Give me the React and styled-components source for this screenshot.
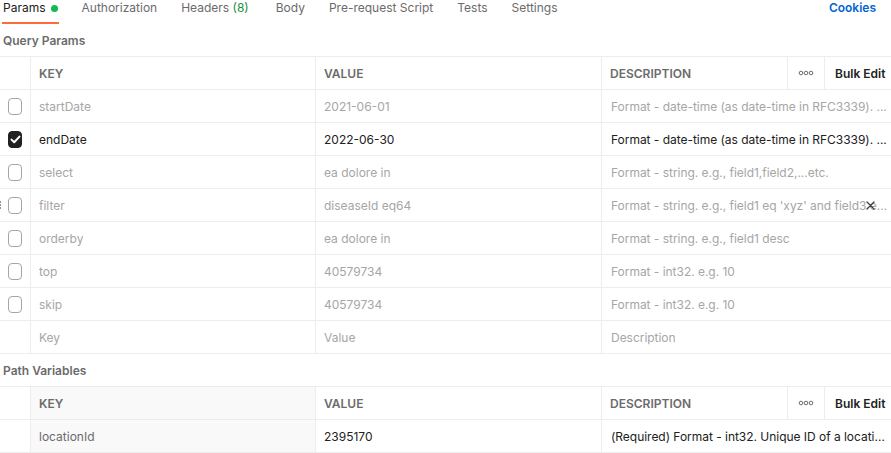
import styled, { createGlobalStyle } from "styled-components";

const GlobalStyle = createGlobalStyle`
  * { box-sizing: border-box; }
  body {
    margin: 0;
    background: #ffffff;
    font-family: Inter, "Noto Sans", sans-serif;
    font-size: 12px;
    color: #212121;
  }
`;

const Page = styled.div`
  width: 891px;
  overflow: hidden;
`;

const TabBar = styled.div`
  display: flex;
  align-items: flex-start;
  height: 24px;
  padding: 0 15px 0 2px;
`;

const Tab = styled.div`
  display: flex;
  align-items: flex-start;
  gap: 5px;
  height: 24px;
  padding: 1px 1px 0;
  margin-right: ${(p) => (p.$wide ? "25px" : "22px")};
  line-height: 14px;
  color: ${(p) => (p.$active ? "#212121" : "#6b6b6b")};
  border-bottom: 2px solid ${(p) => (p.$active ? "#ff6c37" : "transparent")};
`;

const Dot = styled.span`
  width: 7px;
  height: 7px;
  margin-top: 4px;
  border-radius: 50%;
  background: #0cbb52;
`;

const Count = styled.span`
  color: #1b8f45;
`;

const Cookies = styled.div`
  margin-left: auto;
  padding-top: 1px;
  line-height: 14px;
  color: #0265d2;
  font-weight: 600;
`;

const SectionTitle = styled.div`
  height: 32px;
  line-height: 33px;
  padding-left: 3px;
  font-weight: 600;
  color: #6b6b6b;
`;

const Table = styled.div`
  display: grid;
  grid-template-columns: 30px 285px 286px 186px 37px 67px;
  border-top: 1px solid #ededed;
`;

const Row = styled.div`
  display: contents;
`;

const Cell = styled.div`
  position: relative;
  display: flex;
  align-items: center;
  height: 33px;
  padding: 0 ${(p) => (p.$tight ? "0" : "8px")} 0 ${(p) => (p.$tight ? "9px" : "8px")};
  border-bottom: 1px solid #ededed;
  border-left: ${(p) => (p.$noLeft ? "none" : "1px solid #ededed")};
  grid-column: ${(p) => (p.$span ? `span ${p.$span}` : "auto")};
  background: ${(p) => (p.$shaded ? "#f9f9f9" : "#ffffff")};
  color: ${(p) => p.$color || "#212121"};
  letter-spacing: ${(p) => (p.$tight ? "-0.03px" : "0")};
  white-space: nowrap;
  min-width: 0;
`;

const HeadCell = styled(Cell)`
  font-weight: 600;
  color: #6b6b6b;
  justify-content: ${(p) => (p.$center ? "center" : "flex-start")};
`;

const Text = styled.span`
  display: block;
  overflow: hidden;
  white-space: nowrap;
  text-overflow: ellipsis;
`;

const Box = styled.span`
  width: 17px;
  height: 17px;
  border-radius: 4px;
  border: 1px solid ${(p) => (p.$checked ? "#212121" : "#a6a6a6")};
  background: ${(p) => (p.$checked ? "#212121" : "#ffffff")};
  display: flex;
  align-items: center;
  justify-content: center;
`;

const Handle = styled.span`
  position: absolute;
  left: -1px;
  top: 12px;
  display: flex;
  flex-direction: column;
  gap: 1px;
  span {
    width: 2px;
    height: 2px;
    border-radius: 50%;
    background: #6b6b6b;
  }
`;

const DeleteBtn = styled.span`
  position: absolute;
  right: 16px;
  top: 11px;
  width: 9px;
  height: 10px;
  display: flex;
  align-items: center;
  justify-content: center;
`;

const BulkEdit = styled(HeadCell)`
  color: #212121;
  padding: 0 0 0 10px;
`;

const Check = ({ checked }) => (
  <Box $checked={checked}>
    {checked && (
      <svg width="11" height="9" viewBox="0 0 11 9">
        <path d="M1.5 4.6 L4.2 7.2 L9.5 1.6" fill="none" stroke="#fff" strokeWidth="2" strokeLinecap="round" strokeLinejoin="round" />
      </svg>
    )}
  </Box>
);

const Dots = () => (
  <svg width="16" height="6" viewBox="0 0 16 6">
    {[3, 8, 13].map((x) => (
      <circle key={x} cx={x} cy="3" r="1.8" fill="none" stroke="#6b6b6b" strokeWidth="1" />
    ))}
  </svg>
);

const params = [
  { key: "startDate", value: "2021-06-01", desc: "Format - date-time (as date-time in RFC3339). ..." },
  { key: "endDate", value: "2022-06-30", desc: "Format - date-time (as date-time in RFC3339). ...", on: true },
  { key: "select", value: "ea dolore in", desc: "Format - string. e.g., field1,field2,...etc." },
  { key: "filter", value: "diseaseId eq64", desc: "Format - string. e.g., field1 eq 'xyz' and field3 eq 'abc' ...", hover: true },
  { key: "orderby", value: "ea dolore in", desc: "Format - string. e.g., field1 desc" },
  { key: "top", value: "40579734", desc: "Format - int32. e.g. 10" },
  { key: "skip", value: "40579734", desc: "Format - int32. e.g. 10" },
];

const Header = ({ shadedKey }) => (
  <Row>
    <HeadCell $noLeft />
    <HeadCell $shaded={shadedKey}>KEY</HeadCell>
    <HeadCell>VALUE</HeadCell>
    <HeadCell>DESCRIPTION</HeadCell>
    <HeadCell $center style={{ padding: 0 }}>
      <Dots />
    </HeadCell>
    <BulkEdit>Bulk Edit</BulkEdit>
  </Row>
);

export default function App() {
  return (
    <Page>
      <GlobalStyle />
      <TabBar>
        <Tab $active>
          Params <Dot />
        </Tab>
        <Tab>Authorization</Tab>
        <Tab $wide>
          <span>
            Headers <Count>(8)</Count>
          </span>
        </Tab>
        <Tab>Body</Tab>
        <Tab>Pre-request Script</Tab>
        <Tab>Tests</Tab>
        <Tab>Settings</Tab>
        <Cookies>Cookies</Cookies>
      </TabBar>

      <SectionTitle>Query Params</SectionTitle>
      <Table>
        <Header />
        {params.map((p) => {
          const color = p.on ? "#212121" : "#a6a6a6";
          return (
            <Row key={p.key}>
              <Cell $noLeft>
                {p.hover && (
                  <Handle>
                    <span />
                    <span />
                    <span />
                  </Handle>
                )}
                <Check checked={p.on} />
              </Cell>
              <Cell $color={color}>
                <Text>{p.key}</Text>
              </Cell>
              <Cell $color={color}>
                <Text>{p.value}</Text>
              </Cell>
              <Cell $span={3} $color={color} $tight>
                <Text>{p.desc}</Text>
                {p.hover && (
                  <DeleteBtn>
                    <svg width="9" height="9" viewBox="0 0 9 9">
                      <path d="M1 1 L8 8 M8 1 L1 8" stroke="#3c3c3c" strokeWidth="1.3" strokeLinecap="round" />
                    </svg>
                  </DeleteBtn>
                )}
              </Cell>
            </Row>
          );
        })}
        <Row>
          <Cell $noLeft />
          <Cell $color="#a6a6a6">Key</Cell>
          <Cell $color="#a6a6a6">Value</Cell>
          <Cell $span={3} $color="#a6a6a6" $tight>Description</Cell>
        </Row>
      </Table>

      <SectionTitle>Path Variables</SectionTitle>
      <Table>
        <Header shadedKey />
        <Row>
          <Cell $noLeft />
          <Cell $shaded $color="#6b6b6b">
            <Text>locationId</Text>
          </Cell>
          <Cell>
            <Text>2395170</Text>
          </Cell>
          <Cell $span={3} $tight>
            <Text>(Required) Format - int32. Unique ID of a location for which data is requested</Text>
          </Cell>
        </Row>
      </Table>
    </Page>
  );
}
